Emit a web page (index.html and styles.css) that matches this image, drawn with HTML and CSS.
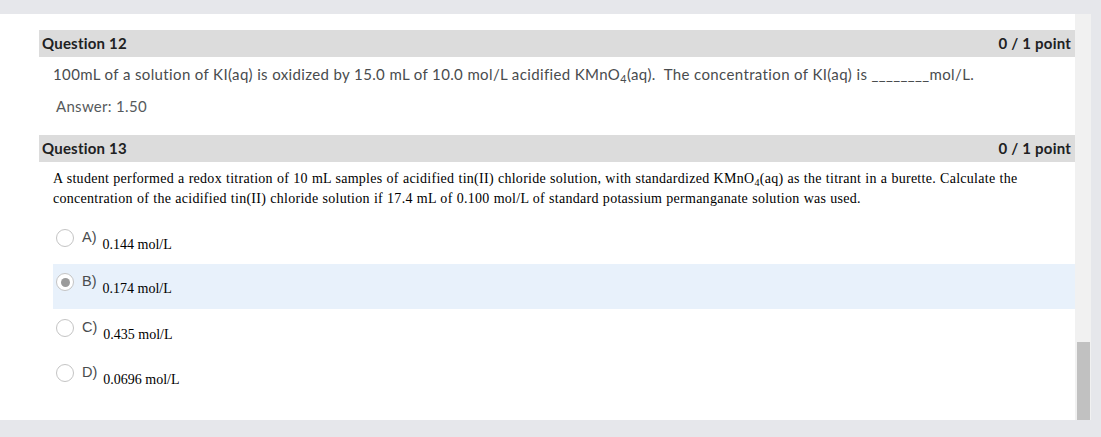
FILE: index.html
```html
<!DOCTYPE html>
<html>
<head>
<meta charset="utf-8">
<link rel="stylesheet" href="styles.css">
</head>
<body>
<div class="frame">
  <div class="content">
    <div class="qhead"><span>Question 12</span><span>0 / 1 point</span></div>
    <div class="qtext">100mL of a solution of KI(aq) is oxidized by 15.0 mL of 10.0 mol/L acidified KMnO<sub>4</sub>(aq).&nbsp; The concentration of KI(aq) is ________mol/L.</div>
    <div class="answer">Answer: 1.50</div>

    <div class="qhead q13"><span>Question 13</span><span>0 / 1 point</span></div>
    <div class="serif-text">A student performed a redox titration of 10 mL samples of acidified tin(II) chloride solution, with standardized KMnO<sub>4</sub>(aq) as the titrant in a burette. Calculate the concentration of the acidified tin(II) chloride solution if 17.4 mL of 0.100 mol/L of standard potassium permanganate solution was used.</div>

    <div class="options">
      <div class="opt"><span class="radio"></span><span class="letter">A)</span><span class="val">0.144 mol/L</span></div>
      <div class="opt selected"><span class="radio checked"></span><span class="letter">B)</span><span class="val">0.174 mol/L</span></div>
      <div class="opt"><span class="radio"></span><span class="letter">C)</span><span class="val">0.435 mol/L</span></div>
      <div class="opt"><span class="radio"></span><span class="letter">D)</span><span class="val">0.0696 mol/L</span></div>
    </div>
  </div>
  <div class="scrollbar"><div class="thumb"></div></div>
</div>
</body>
</html>
```
FILE: styles.css
```css
html, body {
  margin: 0;
  padding: 0;
}
body {
  background: #e6e7eb;
  width: 1101px;
  height: 437px;
  overflow: hidden;
  font-family: Lato, "Liberation Sans", sans-serif;
}
.frame {
  display: flex;
  margin-top: 14px;
  height: 406px;
}
.content {
  width: 1075px;
  height: 406px;
  background: #ffffff;
  box-sizing: border-box;
  padding: 16px 0 0 39px;
  overflow: hidden;
}
.scrollbar {
  width: 16px;
  background: #f1f1f1;
  display: flex;
  flex-direction: column;
  justify-content: flex-end;
}
.thumb {
  height: 78px;
  margin: 0 1px 0 2px;
  background: #c1c1c1;
}
.qhead {
  height: 27px;
  background: #dcdcdc;
  display: flex;
  justify-content: space-between;
  align-items: center;
  padding: 0 4px 1px 3px;
  box-sizing: border-box;
  font-weight: bold;
  font-size: 15px;
  letter-spacing: 0.2px;
  color: #202122;
}
.qtext {
  font-size: 15px;
  letter-spacing: 0.37px;
  color: #494c4e;
  padding: 8px 0 0 14px;
  height: 26px;
}
sub {
  font-size: 72%;
  vertical-align: -3px;
  line-height: 0;
}
.answer {
  font-size: 15px;
  letter-spacing: 0.3px;
  color: #565a5c;
  padding: 6px 0 0 17px;
  height: 23px;
}
.q13 {
  margin-top: 15px;
}
.serif-text {
  font-family: "Liberation Serif", "Times New Roman", serif;
  font-size: 14px;
  letter-spacing: 0.28px;
  word-spacing: 0.3px;
  line-height: 20px;
  color: #000;
  padding: 7px 20px 0 14px;
  height: 50px;
}
.options {
  margin-left: 14px;
}
.opt {
  height: 45px;
  display: flex;
  align-items: flex-start;
  padding-left: 3px;
  box-sizing: border-box;
  padding-top: 10px;
}
.opt.selected {
  background: #e8f1fb;
  padding-top: 9px;
}
.radio {
  width: 18px;
  height: 18px;
  box-sizing: border-box;
  border: 1px solid #c4c4c4;
  border-radius: 50%;
  background: #fff;
  display: flex;
  align-items: center;
  justify-content: center;
}
.radio.checked::after {
  content: "";
  width: 9px;
  height: 9px;
  border-radius: 50%;
  background: #9b9b9b;
}
.letter {
  font-family: "Liberation Sans", Arial, sans-serif;
  font-size: 14.5px;
  color: #494c4e;
  margin-left: 8px;
  line-height: 16px;
}
.val {
  font-family: "Liberation Serif", "Times New Roman", serif;
  font-size: 14px;
  color: #000;
  margin-left: 6px;
  padding-top: 8px;
  line-height: 16px;
}
```
